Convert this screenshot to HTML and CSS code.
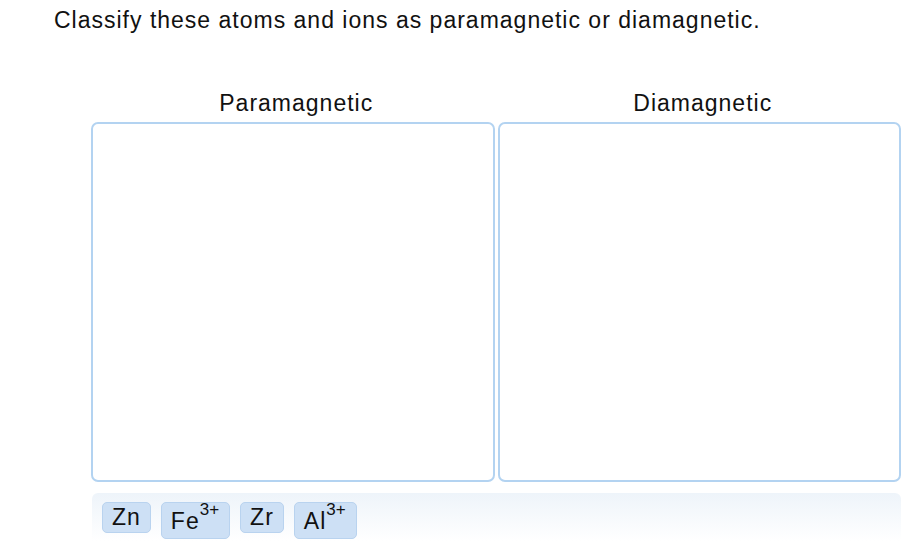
FILE: index.html
```html
<!DOCTYPE html>
<html>
<head>
<meta charset="utf-8">
<link rel="stylesheet" href="styles.css">
</head>
<body>
<div class="page">
  <h1 class="title">Classify these atoms and ions as paramagnetic or diamagnetic.</h1>
  <div class="bins">
    <div class="bin">
      <div class="bin-label">Paramagnetic</div>
      <div class="bin-box"></div>
    </div>
    <div class="bin">
      <div class="bin-label">Diamagnetic</div>
      <div class="bin-box"></div>
    </div>
  </div>
  <div class="tray">
    <span class="chip">Zn</span>
    <span class="chip ion">Fe<sup>3+</sup></span>
    <span class="chip">Zr</span>
    <span class="chip ion">Al<sup>3+</sup></span>
  </div>
</div>
</body>
</html>
```
FILE: styles.css
```css
html, body {
  margin: 0;
  padding: 0;
  background: #ffffff;
}
body {
  font-family: "Liberation Sans", Arial, sans-serif;
  color: #111111;
  letter-spacing: 1px;
}
.page {
  width: 922px;
  height: 550px;
  overflow: hidden;
}
.title {
  margin: 0;
  padding: 5px 0 0 54px;
  font-size: 23px;
  font-weight: normal;
  line-height: 30px;
}
.bins {
  display: flex;
  gap: 3px;
  margin: 53px 0 0 91px;
  width: 810px;
}
.bin {
  flex: 1;
  display: flex;
  flex-direction: column;
  align-items: center;
}
.bin-label {
  font-size: 23px;
  line-height: 30px;
  padding-left: 7px;
  margin-bottom: 4px;
}
.bin-box {
  align-self: stretch;
  height: 356px;
  border: 2px solid #b3d3f1;
  border-radius: 7px;
}
.tray {
  margin: 11px 0 0 92px;
  width: 809px;
  height: 48px;
  box-sizing: border-box;
  padding: 9px 0 0 10px;
  display: flex;
  align-items: flex-start;
  gap: 10px;
  border-radius: 6px 6px 0 0;
  background: linear-gradient(#eef4fa, #ffffff);
}
.chip {
  display: inline-block;
  background: #cde0f5;
  border: 1px solid #b9d3ef;
  border-radius: 5px;
  font-size: 23px;
  line-height: 29px;
  padding: 0 9px;
  color: #111;
}
.chip.ion {
  padding-bottom: 2px;
}
.chip sup {
  font-size: 17px;
  line-height: 13px;
  letter-spacing: 0;
  vertical-align: 14px;
  padding-right: 1px;
}
```
